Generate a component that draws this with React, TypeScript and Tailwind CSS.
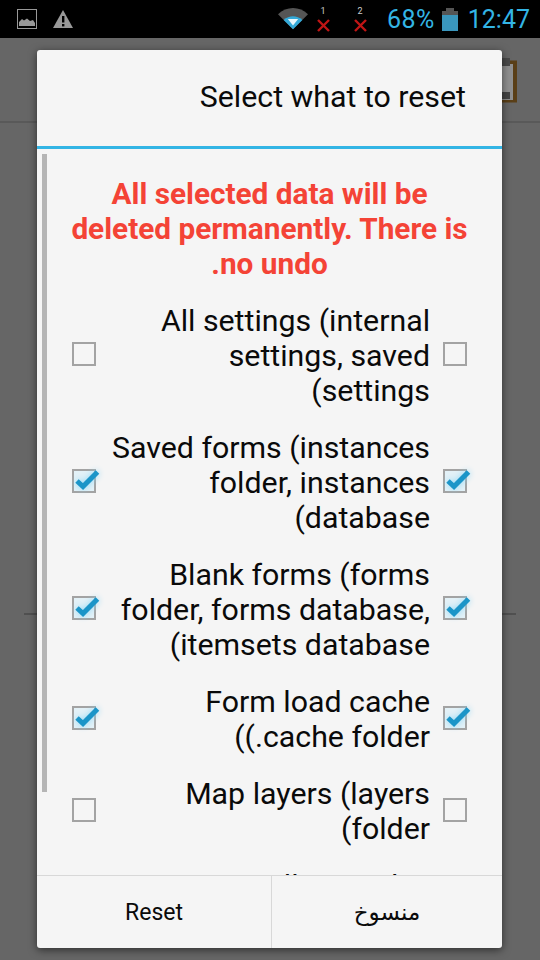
const font = { fontFamily: 'Roboto, "DejaVu Sans", sans-serif' }

const rows = [
  { label: 'All settings (internal settings, saved settings', checked: false },
  { label: 'Saved forms (instances folder, instances database', checked: true },
  { label: 'Blank forms (forms folder, forms database, itemsets database', checked: true },
  { label: 'Form load cache (.cache folder', checked: true },
  { label: 'Map layers (layers folder', checked: false },
  { label: 'OSOS all map tiles (osmdroid folder', checked: false },
]

function Check({ checked }: { checked: boolean }) {
  return (
    <div className="relative mb-[3px] h-6 w-6 shrink-0 border-2 border-[#a3a3a3] bg-[#f5f5f5]">
      {checked && (
        <>
          <div className="absolute inset-0 bg-[#e3f1f7]" />
          <svg className="absolute -left-[2px] -top-[2px] h-[30px] w-[30px] overflow-visible drop-shadow-[0_0_3px_#8fd8f5]" viewBox="0 0 30 30">
            <path d="M5 12 L11 17.5 L25.5 3" fill="none" stroke="#1b95c8" strokeWidth="5" />
          </svg>
        </>
      )}
    </div>
  )
}

function Sim({ n }: { n: string }) {
  return (
    <div className="ml-[5px] flex w-[20px] flex-col items-center">
      <span className="h-[11px] text-[9px] leading-[11px] text-[#ccc]" style={font}>{n}</span>
      <svg className="mt-[2px] h-[13px] w-[13px]" viewBox="0 0 13 13">
        <path d="M1 1 L12 12 M12 1 L1 12" stroke="#c01515" strokeWidth="2.4" />
      </svg>
    </div>
  )
}

function StatusBar() {
  return (
    <div className="flex h-[38px] items-center bg-black pl-[17px] pr-[10px]">
      <svg className="h-5 w-5" viewBox="0 0 20 20">
        <rect x="0.5" y="0.5" width="19" height="19" fill="none" stroke="#999" />
        <path d="M2 17 V13 L5 10 L7 11.5 L10 9.5 L13 12 L16 11 L18 14 V17 Z" fill="#999" />
      </svg>
      <svg className="ml-4 h-[19px] w-5" viewBox="0 0 20 19">
        <path d="M10 0 L20 18 H0 Z" fill="#999" />
        <rect x="9" y="6" width="2.4" height="6.5" fill="#000" />
        <rect x="9" y="14" width="2.4" height="2.4" fill="#000" />
      </svg>
      <div className="flex-1" />
      <svg className="mb-[2px] h-6 w-[30px]" viewBox="0 0 32 24">
        <path d="M0 8 C9 -1 23 -1 32 8 L16 24 Z" fill="#555" />
        <path d="M6 14 C12 9 20 9 26 14 L16 24 Z" fill="#33a9d8" />
        <path d="M10.5 13 H21.5 L16 20 Z" fill="#e8f7fc" />
      </svg>
      <Sim n="1" />
      <div className="w-[12px]" />
      <Sim n="2" />
      <span className="ml-[17px] text-[25px] leading-none tracking-[0.4px] text-[#33b5e5]" style={font}>68%</span>
      <div className="relative ml-[7px] h-[23px] w-4">
        <div className="mx-auto h-[3px] w-2 bg-[#555]" />
        <div className="h-[4px] w-4 bg-[#555]" />
        <div className="h-4 w-4 bg-[#3a96bc]" />
      </div>
      <span className="ml-[10px] text-[25px] leading-none text-[#33b5e5]" style={font}>12:47</span>
    </div>
  )
}

export default function App() {
  return (
    <div className="relative h-[960px] w-[540px] overflow-hidden bg-[#666]" style={font}>
      <StatusBar />
      <div className="flex h-[85px] items-center justify-end border-b-2 border-[#595959] pr-[22px]">
        <svg className="h-[46px] w-[30px]" viewBox="0 0 30 46">
          <rect x="1" y="3.5" width="28" height="42" fill="#5a3f17" />
          <rect x="4" y="7" width="21" height="36" fill="#8f8f8f" />
          <rect x="12" y="35" width="10" height="7" fill="#444" />
          <rect x="10" y="1" width="12" height="8" fill="#4a4a4a" />
        </svg>
      </div>
      <div className="mt-[490px] flex justify-between px-6">
        <div className="h-[2px] w-[14px] bg-[#505050]" />
        <div className="h-[2px] w-[14px] bg-[#505050]" />
      </div>

      <div className="absolute left-[37px] top-[50px] flex h-[898px] w-[465px] flex-col overflow-hidden rounded-[3px] bg-[#f5f5f5] shadow-[0_2px_8px_rgba(0,0,0,0.55)]">
        <div className="flex h-[96px] shrink-0 items-center justify-end pb-[2px] pr-[36px] text-[30.3px] text-[#0a0a0a]">
          Select what to reset
        </div>
        <div className="h-[3px] shrink-0 bg-[#33b5e5]" />
        <div className="relative flex-1 overflow-hidden">
          <div className="absolute left-[5px] top-[5px] h-[638px] w-[5px] bg-[#b5b5b5]" />
          <p dir="rtl" className="px-[30px] pt-[27px] text-center text-[29.75px] font-bold leading-[35px] text-[#f44336]">
            All selected data will be deleted permanently. There is no undo.
          </p>
          <div className="flex flex-col gap-[22px] px-[35px] pt-[22px]">
            {rows.map((row) => (
              <div key={row.label} className="flex items-center">
                <Check checked={row.checked} />
                <p dir="rtl" className="flex-1 pl-3 pr-[13px] text-[30.3px] leading-[35px] text-[#0a0a0a]">
                  {row.label}
                  <span dir="rtl">)</span>
                </p>
                <Check checked={row.checked} />
              </div>
            ))}
          </div>
        </div>
        <div className="flex h-[73px] shrink-0 border-t border-[#d8d8d8] text-[23px] text-[#0a0a0a]">
          <div className="flex w-[235px] items-center justify-center border-r border-[#d8d8d8] pt-[3px]">Reset</div>
          <div className="flex flex-1 items-center justify-center pt-[3px]">منسوخ</div>
        </div>
      </div>
    </div>
  )
}
